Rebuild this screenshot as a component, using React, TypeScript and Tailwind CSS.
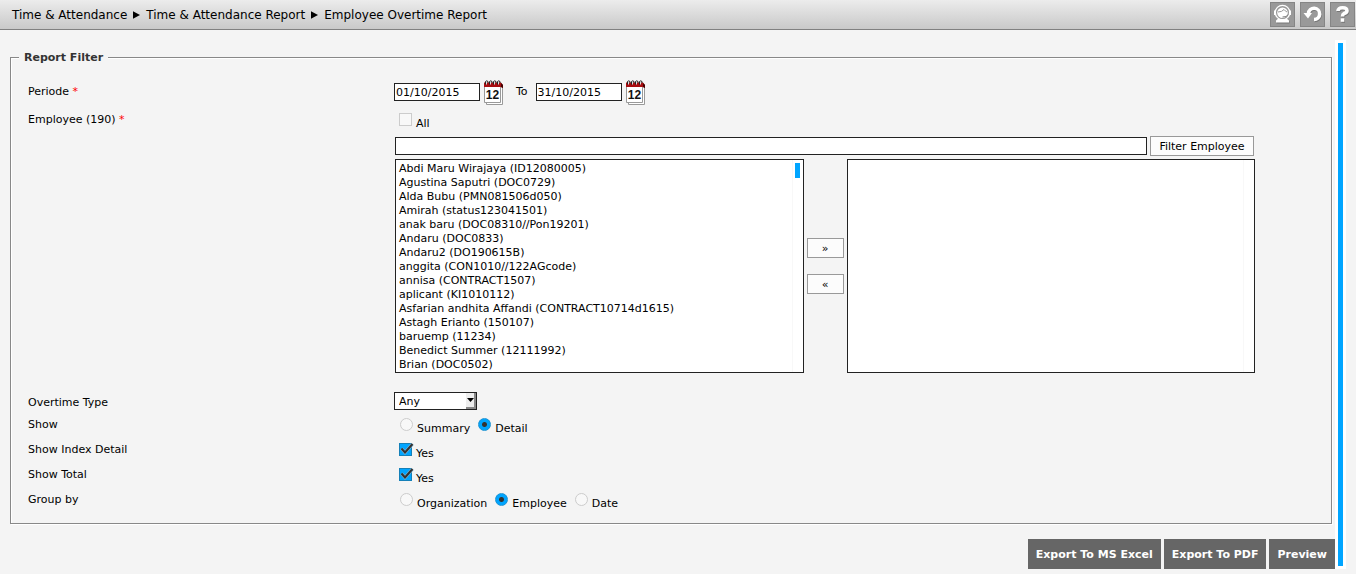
import type { ReactNode } from "react";

const employees = [
  "Abdi Maru Wirajaya (ID12080005)",
  "Agustina Saputri (DOC0729)",
  "Alda Bubu (PMN081506d050)",
  "Amirah (status123041501)",
  "anak baru (DOC08310//Pon19201)",
  "Andaru (DOC0833)",
  "Andaru2 (DO190615B)",
  "anggita (CON1010//122AGcode)",
  "annisa (CONTRACT1507)",
  "aplicant (KI1010112)",
  "Asfarian andhita Affandi (CONTRACT10714d1615)",
  "Astagh Erianto (150107)",
  "baruemp (11234)",
  "Benedict Summer (12111992)",
  "Brian (DOC0502)",
];

function Crumb({ children }: { children: ReactNode }) {
  return (
    <a href="#" className="whitespace-nowrap">
      {children}
    </a>
  );
}

function CrumbArrow() {
  return (
    <svg className="mx-[6px] h-[8px] w-[7px]" viewBox="0 0 7 8" aria-hidden="true">
      <path d="M0 0.3 L7 4 L0 7.7 Z" fill="#000" />
    </svg>
  );
}

function ToolButton({ label, children }: { label: string; children: ReactNode }) {
  return (
    <button
      type="button"
      aria-label={label}
      className="flex size-[25px] items-center justify-center border border-[#858585] bg-[#999]"
    >
      <svg viewBox="0 0 23 23" className="size-[23px] shrink-0" fill="none" aria-hidden="true">
        {children}
      </svg>
    </button>
  );
}

function DateField({ id, label, value }: { id: string; label: string; value: string }) {
  return (
    <div className="flex items-center gap-1">
      <input
        id={id}
        aria-label={label}
        defaultValue={value}
        className="h-[18px] w-[86px] border border-[#222] bg-white px-px"
      />
      <button type="button" aria-label={`Pick ${label}`} className="h-[25px] w-[20px]">
        <svg viewBox="0 -1 20 25" className="h-[25px] w-[20px]" aria-hidden="true">
          <path d="M2.5 6 V23.5 H18.5 V6" fill="#fff" stroke="#999" />
          <path d="M0.5 4 V21.5 H16.5 V6" fill="#fff" stroke="#999" />
          <path d="M0 1.5 H17 L19 4 V7 L17 6 H0 Z" fill="#a80d10" />
          <path d="M17 2 L19 4 V7 L17 6 Z" fill="#400" />
          <g stroke="#222" fill="none">
            <path d="M1.5 3.5 V0.5 Q2.5 -0.8 4 0.5 V2" />
            <path d="M5.5 3.5 V0.5 Q6.5 -0.8 8 0.5 V2" />
            <path d="M9.5 3.5 V0.5 Q10.5 -0.8 12 0.5 V2" />
            <path d="M13.5 3.5 V0.5 Q14.5 -0.8 16 0.5 V2" />
          </g>
          <path d="M2.5 1 V3.5 M6.5 1 V3.5 M10.5 1 V3.5 M14.5 1 V3.5" stroke="#ddd" fill="none" />
          <text
            x="8.5"
            y="18"
            textAnchor="middle"
            fontFamily="Liberation Sans, sans-serif"
            fontWeight="bold"
            fontSize="12"
            fill="#111"
          >
            12
          </text>
        </svg>
      </button>
    </div>
  );
}

function Check({ label, checked }: { label: string; checked?: boolean }) {
  return (
    <label className="flex items-start gap-1">
      <span className="relative block size-[13px]">
        <input
          type="checkbox"
          defaultChecked={checked}
          className="peer block size-[13px] appearance-none border border-[#ccc] bg-[#f8f8f8] checked:border-[#1580b8] checked:bg-[#00a5ff]"
        />
        <svg
          viewBox="0 0 15 13"
          className="pointer-events-none absolute top-0 left-0 hidden h-[13px] w-[15px] max-w-none peer-checked:block"
          fill="none"
          aria-hidden="true"
        >
          <path d="M2.5 5.5 L6 9.5 L13.5 1" stroke="#7fb4d0" strokeWidth="3.4" />
          <path d="M2.5 5.5 L6 9.5 L13.5 1" stroke="#333" strokeWidth="2" />
        </svg>
      </span>
      <span className="pt-[4px]">{label}</span>
    </label>
  );
}

function Radio({ name, label, checked }: { name: string; label: string; checked?: boolean }) {
  return (
    <label className="flex items-start gap-1">
      <input
        type="radio"
        name={name}
        defaultChecked={checked}
        className="block size-[13px] appearance-none rounded-full border border-[#ccc] bg-[#f8f8f8] checked:border-[#1b93d3] checked:bg-[radial-gradient(circle,#333_0_2px,#00a5ff_3px)]"
      />
      <span className="pt-[4px]">{label}</span>
    </label>
  );
}

function Row({ label, required, children }: { label: string; required?: boolean; children: ReactNode }) {
  return (
    <div className="grid grid-cols-[366px_1fr]">
      <div className="pt-[6px]">
        {label}
        {required && <span className="text-[#f00]"> *</span>}
      </div>
      <div>{children}</div>
    </div>
  );
}

function MoveButton({ label, children }: { label: string; children: ReactNode }) {
  return (
    <button
      type="button"
      aria-label={label}
      className="h-[20px] w-[37px] border border-[#999] bg-[#fcfcfc] pt-px text-center"
    >
      {children}
    </button>
  );
}

function ListBox({ label, items, thumb }: { label: string; items: string[]; thumb?: boolean }) {
  return (
    <div className="relative min-w-0 flex-1">
      <select
        multiple
        aria-label={label}
        className="block h-[214px] w-full overflow-hidden border border-[#222] bg-white pt-[2px] [scrollbar-width:none]"
      >
        {items.map((item) => (
          <option key={item} className="h-[14px] min-h-0 p-0 px-[3px] leading-[14px]">
            {item}
          </option>
        ))}
      </select>
      <div className="pointer-events-none absolute inset-y-px right-px w-[11px] border-l border-[#f8f8f8]">
        {thumb && <div className="mt-[3px] ml-[2px] h-[15px] w-[5px] bg-[#00a5ff]" />}
      </div>
    </div>
  );
}

function ActionButton({ children }: { children: ReactNode }) {
  return (
    <button type="button" className="h-[30px] bg-[#666] px-2 pt-px font-bold whitespace-nowrap text-white">
      {children}
    </button>
  );
}

export default function App() {
  return (
    <div className="min-h-screen bg-[#f4f4f4] font-['DejaVu_Sans',Verdana,sans-serif] text-[11px] leading-[14px] text-black">
      <header className="flex h-[30px] items-center justify-between border-b border-[#808080] bg-linear-to-b from-[#ececec] to-[#c9c9c9] pr-px pl-3">
        <nav aria-label="Breadcrumb" className="flex items-center text-[12px]">
          <Crumb>Time &amp; Attendance</Crumb>
          <CrumbArrow />
          <Crumb>Time &amp; Attendance Report</Crumb>
          <CrumbArrow />
          <Crumb>Employee Overtime Report</Crumb>
        </nav>
        <div className="flex gap-[5px]">
          <ToolButton label="Support">
            <path d="M5.5 20.5 H18.5 V18 L15 15 H8 L5.5 18 Z" fill="#777" />
            <path d="M5 19.5 V17.5 Q7 15 9 15 H14 Q16 15 18 17.5 V19.5 Z" fill="#fff" />
            <circle cx="11.5" cy="9.5" r="7.2" fill="#999" stroke="#fff" strokeWidth="1.3" />
            <circle cx="11.5" cy="9.7" r="5.3" fill="#fff" />
            <path d="M7 9 Q11 9 13 6.5 Q14 8 16 9" stroke="#999" />
            <path d="M17 11.5 Q16 14.5 11.5 14" stroke="#777" />
            <path d="M4 7.5 V12 M19 7.5 V12" stroke="#fff" strokeWidth="2" />
          </ToolButton>
          <ToolButton label="Refresh">
            <path d="M8 11.5 A5.6 5.6 0 1 1 13.5 17.5" stroke="#777" strokeWidth="3.6" />
            <path d="M7.5 10.5 A5.6 5.6 0 1 1 13 16.5" stroke="#fff" strokeWidth="3.6" />
            <path d="M2.5 10 H11 L7 15.5 Z" fill="#fff" />
          </ToolButton>
          <ToolButton label="Help">
            <g transform="translate(0.7 1)" stroke="#777" strokeWidth="3.6">
              <path d="M7 8 Q7 4.8 11.5 4.8 Q16 4.8 16 7.7 Q16 9.5 13 10.5 Q11.5 11.3 11.5 13.5" />
              <path d="M11.5 15.3 V18.8" />
            </g>
            <g stroke="#fff" strokeWidth="3.6">
              <path d="M7 8 Q7 4.8 11.5 4.8 Q16 4.8 16 7.7 Q16 9.5 13 10.5 Q11.5 11.3 11.5 13.5" />
              <path d="M11.5 15.3 V18.8" />
            </g>
          </ToolButton>
        </div>
      </header>

      <div className="flex pt-[10px] pr-[10px] pl-[10px]">
        <main className="min-w-0 flex-1 pt-[9px]">
          <fieldset className="mr-[3px] border border-[#888] px-2 pb-[11px] shadow-[1px_1px_0_#fff,inset_1px_1px_0_#fff]">
            <legend className="bg-[#f4f4f4] px-[5px] pt-[2px] font-bold text-[#333]">Report Filter</legend>
            <div className="pt-[14px] pl-[9px]">
              <Row label="Periode" required>
                <div className="mb-[2px] flex h-[26px] items-center">
                  <DateField id="from" label="start date" value="01/10/2015" />
                  <span className="mr-2 ml-3">To</span>
                  <DateField id="to" label="end date" value="31/10/2015" />
                </div>
              </Row>
              <Row label="Employee (190)" required>
                <div className="mr-[68px] pb-[17px] pl-px">
                  <div className="h-[29px] pt-[6px] pl-1">
                    <Check label="All" />
                  </div>
                  <div className="flex items-center gap-[3px]">
                    <input
                      aria-label="Employee filter"
                      className="h-[18px] min-w-0 flex-1 border border-[#222] bg-white px-1"
                    />
                    <button
                      type="button"
                      className="mr-px h-[20px] w-[104px] border border-[#999] bg-[#fcfcfc] pt-px whitespace-nowrap"
                    >
                      Filter Employee
                    </button>
                  </div>
                  <div className="mt-[3px] flex gap-[3px]">
                    <ListBox label="Available employees" items={employees} thumb />
                    <div className="flex flex-col justify-center gap-4">
                      <MoveButton label="Add">»</MoveButton>
                      <MoveButton label="Remove">«</MoveButton>
                    </div>
                    <ListBox label="Selected employees" items={[]} />
                  </div>
                </div>
              </Row>
              <Row label="Overtime Type">
                <div className="h-[22px] pt-[2px]">
                  <div className="relative w-[83px]">
                    <select
                      aria-label="Overtime Type"
                      className="block h-[18px] w-full appearance-none border border-[#222] bg-white px-1 pt-px"
                    >
                      <option>Any</option>
                    </select>
                    <span className="pointer-events-none absolute top-px right-px flex h-[16px] w-[10px] items-center border-r-2 border-b-2 border-[#888] bg-[#eee]">
                      <svg viewBox="0 0 7 4" className="ml-px h-[4px] w-[7px]" aria-hidden="true">
                        <path d="M0 0 H7 L3.5 4 Z" fill="#000" />
                      </svg>
                    </span>
                  </div>
                </div>
              </Row>
              <Row label="Show">
                <div className="flex h-[25px] gap-2 pt-[6px] pl-[6px]">
                  <Radio name="show" label="Summary" />
                  <Radio name="show" label="Detail" checked />
                </div>
              </Row>
              <Row label="Show Index Detail">
                <div className="flex h-[25px] pt-[6px] pl-[5px]">
                  <Check label="Yes" checked />
                </div>
              </Row>
              <Row label="Show Total">
                <div className="flex h-[25px] pt-[6px] pl-[5px]">
                  <Check label="Yes" checked />
                </div>
              </Row>
              <Row label="Group by">
                <div className="flex h-[25px] gap-2 pt-[6px] pl-[6px]">
                  <Radio name="group" label="Organization" />
                  <Radio name="group" label="Employee" checked />
                  <Radio name="group" label="Date" />
                </div>
              </Row>
            </div>
          </fieldset>
          <div className="mt-[15px] flex justify-end gap-[3px]">
            <ActionButton>Export To MS Excel</ActionButton>
            <ActionButton>Export To PDF</ActionButton>
            <ActionButton>Preview</ActionButton>
          </div>
        </main>
        <div className="flex w-[11px] bg-white p-[3px]">
          <div className="w-[5px] bg-[#00a5ff]" />
        </div>
      </div>
    </div>
  );
}
